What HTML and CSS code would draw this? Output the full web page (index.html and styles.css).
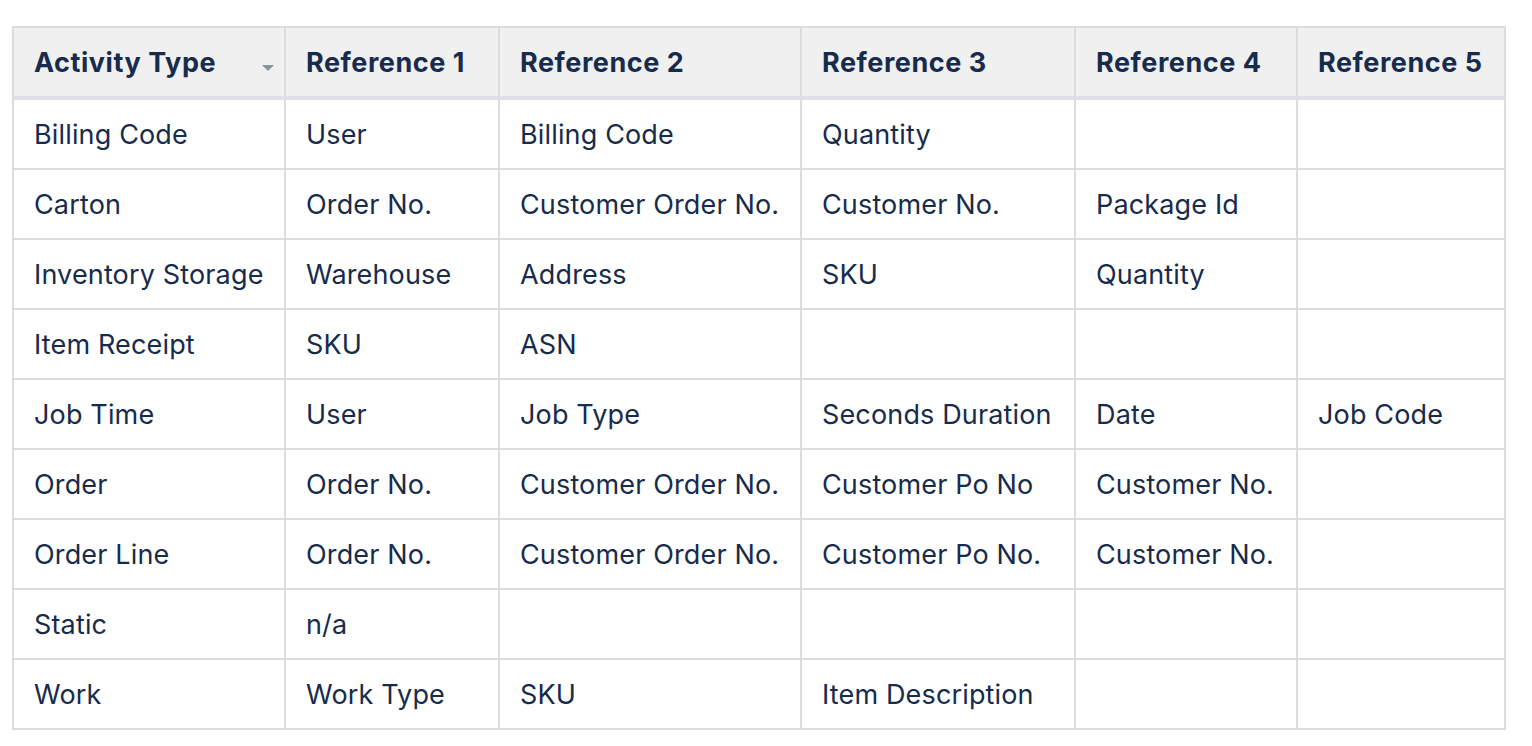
FILE: index.html
```html
<!DOCTYPE html>
<html lang="en">
<head>
<meta charset="utf-8">
<title>Activity Types</title>
<link rel="stylesheet" href="styles.css">
</head>
<body>
<div class="wrap">
<table class="grid">
  <thead>
    <tr>
      <th class="c1"><div class="sortable"><span>Activity Type</span><span class="sort-arrow"></span></div></th>
      <th class="c2">Reference 1</th>
      <th class="c3">Reference 2</th>
      <th class="c4">Reference 3</th>
      <th class="c5">Reference 4</th>
      <th class="c6">Reference 5</th>
    </tr>
  </thead>
  <tbody>
    <tr><td>Billing Code</td><td>User</td><td>Billing Code</td><td>Quantity</td><td></td><td></td></tr>
    <tr><td>Carton</td><td>Order No.</td><td>Customer Order No.</td><td>Customer No.</td><td>Package Id</td><td></td></tr>
    <tr><td>Inventory Storage</td><td>Warehouse</td><td>Address</td><td>SKU</td><td>Quantity</td><td></td></tr>
    <tr><td>Item Receipt</td><td>SKU</td><td>ASN</td><td></td><td></td><td></td></tr>
    <tr><td>Job Time</td><td>User</td><td>Job Type</td><td>Seconds Duration</td><td>Date</td><td>Job Code</td></tr>
    <tr><td>Order</td><td>Order No.</td><td>Customer Order No.</td><td>Customer Po No</td><td>Customer No.</td><td></td></tr>
    <tr><td>Order Line</td><td>Order No.</td><td>Customer Order No.</td><td>Customer Po No.</td><td>Customer No.</td><td></td></tr>
    <tr><td>Static</td><td>n/a</td><td></td><td></td><td></td><td></td></tr>
    <tr><td>Work</td><td>Work Type</td><td>SKU</td><td>Item Description</td><td></td><td></td></tr>
  </tbody>
</table>
</div>
</body>
</html>
```
FILE: styles.css
```css
html, body {
  margin: 0;
  padding: 0;
  background: #ffffff;
}
body {
  font-family: Inter, "Noto Sans", "Liberation Sans", sans-serif;
  color: #172b4d;
}
.wrap {
  padding: 26px 0 0 12px;
}
.grid {
  box-sizing: border-box;
  width: 1494px;
  table-layout: fixed;
  border-collapse: separate;
  border-spacing: 0;
  border-left: 2px solid #dcdcdd;
  border-top: 2px solid #dcdcdd;
  box-shadow: 0 2px 0 #e0e0e5;
}
.grid th,
.grid td {
  box-sizing: border-box;
  height: 70px;
  padding: 15px 20px 13px;
  border-right: 2px solid #dcdcdd;
  border-bottom: 2px solid #dcdcdd;
  font-size: 27px;
  line-height: 40px;
  letter-spacing: 0.15px;
  text-align: left;
  vertical-align: top;
  white-space: nowrap;
  overflow: hidden;
}
.grid th {
  height: 72px;
  background: #f0f0f1;
  font-weight: 700;
  letter-spacing: 0.55px;
  border-bottom: 4px solid #e0e0e6;
}
.grid td {
  font-weight: 400;
}
.c1 { width: 272px; }
.c2 { width: 214px; }
.c3 { width: 302px; }
.c4 { width: 274px; }
.c5 { width: 222px; }
.c6 { width: 208px; }
.sortable {
  display: flex;
  align-items: center;
  justify-content: space-between;
  margin-right: -10px;
}
.sort-arrow {
  width: 0;
  height: 0;
  margin-top: 10px;
  border-left: 6px solid transparent;
  border-right: 6px solid transparent;
  border-top: 6px solid #8a919e;
}
```
